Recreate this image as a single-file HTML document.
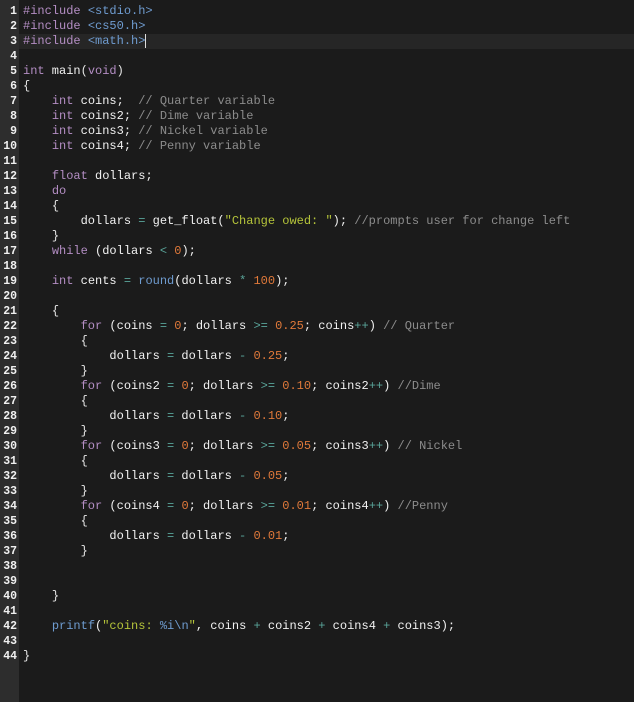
<!DOCTYPE html>
<html><head><meta charset="utf-8"><style>
html,body{margin:0;padding:0;background:#1b1b1b;width:634px;height:702px;overflow:hidden}
.g{position:absolute;left:0;top:0;width:19px;height:702px;background:#2d2d2d}
.hl{position:absolute;left:19px;top:34px;width:615px;height:15px;background:#262626}
pre{position:absolute;margin:0;top:4px;font-family:"Liberation Mono",monospace;font-size:12px;line-height:15px}
.n{left:0;width:17px;text-align:right;color:#f0f0f0;font-weight:bold;font-size:11.5px}
.c{left:23px;color:#f2f2f2}
.k{color:#b48ec4}
.s{color:#b5c43a}
.m{color:#e0793a}
.o{color:#5aa59a}
.f{color:#6f9cd0}
.cm{color:#8c8c8c}
.p{color:#e6e6e6}
.cur{border-right:1px solid #ddd}
</style></head><body>
<div class="g"></div><div class="hl"></div>
<pre class="n">1
2
3
4
5
6
7
8
9
10
11
12
13
14
15
16
17
18
19
20
21
22
23
24
25
26
27
28
29
30
31
32
33
34
35
36
37
38
39
40
41
42
43
44</pre>
<pre class="c"><span class="k">#include</span> <span class="f">&lt;stdio.h&gt;</span>
<span class="k">#include</span> <span class="f">&lt;cs50.h&gt;</span>
<span class="k">#include</span> <span class="f cur">&lt;math.h&gt;</span>

<span class="k">int</span> main<span class="p">(</span><span class="k">void</span><span class="p">)</span>
<span class="p">{</span>
    <span class="k">int</span> coins;  <span class="cm">// Quarter variable</span>
    <span class="k">int</span> coins2; <span class="cm">// Dime variable</span>
    <span class="k">int</span> coins3; <span class="cm">// Nickel variable</span>
    <span class="k">int</span> coins4; <span class="cm">// Penny variable</span>

    <span class="k">float</span> dollars;
    <span class="k">do</span>
    <span class="p">{</span>
        dollars <span class="o">=</span> get_float(<span class="s">"Change owed: "</span>); <span class="cm">//prompts user for change left</span>
    <span class="p">}</span>
    <span class="k">while</span> (dollars <span class="o">&lt;</span> <span class="m">0</span>);

    <span class="k">int</span> cents <span class="o">=</span> <span class="f">round</span>(dollars <span class="o">*</span> <span class="m">100</span>);

    <span class="p">{</span>
        <span class="k">for</span> (coins <span class="o">=</span> <span class="m">0</span>; dollars <span class="o">&gt;=</span> <span class="m">0.25</span>; coins<span class="o">++</span>) <span class="cm">// Quarter</span>
        <span class="p">{</span>
            dollars <span class="o">=</span> dollars <span class="o">-</span> <span class="m">0.25</span>;
        <span class="p">}</span>
        <span class="k">for</span> (coins2 <span class="o">=</span> <span class="m">0</span>; dollars <span class="o">&gt;=</span> <span class="m">0.10</span>; coins2<span class="o">++</span>) <span class="cm">//Dime</span>
        <span class="p">{</span>
            dollars <span class="o">=</span> dollars <span class="o">-</span> <span class="m">0.10</span>;
        <span class="p">}</span>
        <span class="k">for</span> (coins3 <span class="o">=</span> <span class="m">0</span>; dollars <span class="o">&gt;=</span> <span class="m">0.05</span>; coins3<span class="o">++</span>) <span class="cm">// Nickel</span>
        <span class="p">{</span>
            dollars <span class="o">=</span> dollars <span class="o">-</span> <span class="m">0.05</span>;
        <span class="p">}</span>
        <span class="k">for</span> (coins4 <span class="o">=</span> <span class="m">0</span>; dollars <span class="o">&gt;=</span> <span class="m">0.01</span>; coins4<span class="o">++</span>) <span class="cm">//Penny</span>
        <span class="p">{</span>
            dollars <span class="o">=</span> dollars <span class="o">-</span> <span class="m">0.01</span>;
        <span class="p">}</span>


    <span class="p">}</span>

    <span class="f">printf</span>(<span class="s">"coins: </span><span class="f">%i\n</span><span class="s">"</span>, coins <span class="o">+</span> coins2 <span class="o">+</span> coins4 <span class="o">+</span> coins3);

<span class="p">}</span></pre>
</body></html>
